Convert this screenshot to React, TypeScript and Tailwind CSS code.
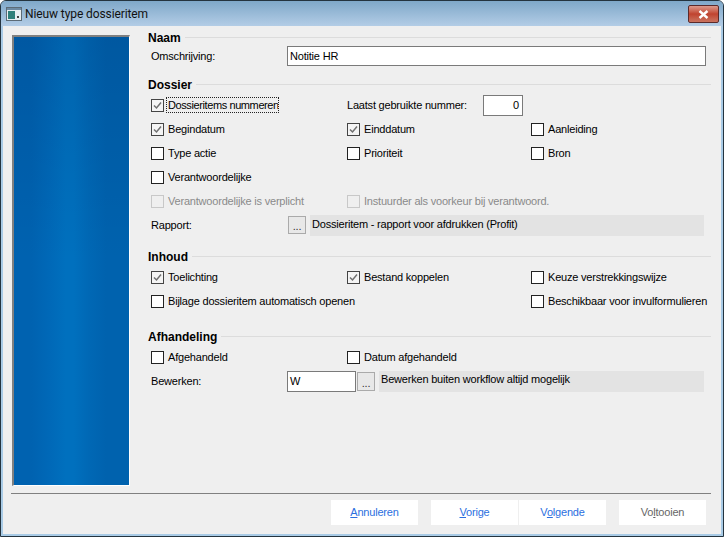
import React from "react";

function Check({ label, checked = false, disabled = false, focus = false }: { label: string; checked?: boolean; disabled?: boolean; focus?: boolean }) {
  return (
    <div className="flex items-center h-6">
      <span className={`w-[13px] h-[13px] border flex items-center justify-center shrink-0 ${disabled ? "border-[#c8c8c8] bg-[#efefef]" : checked ? "border-[#444] bg-[#f4f4f4]" : "border-[#222] bg-white"}`}>
        {checked && (
          <svg width="11" height="11" viewBox="0 0 11 11" fill="none">
            <path d="M2 5.5 L4.5 8 L9 2.5" stroke="#707070" strokeWidth="1.5" />
          </svg>
        )}
      </span>
      <span className={`ml-[2px] px-px whitespace-nowrap leading-[14px] border border-dotted ${focus ? "border-[#222] w-[113px] overflow-hidden tracking-[-0.4px]" : "border-transparent"} ${disabled ? "text-[#8a8a8a]" : "text-black"}`}>
        {label}
      </span>
    </div>
  );
}

function Header({ title }: { title: string }) {
  return (
    <div className="flex items-center h-[17px]">
      <span className="font-bold text-[12px] tracking-normal text-black mr-1">{title}</span>
      <span className="flex-1 h-px bg-[#dcdcdc]" />
    </div>
  );
}

function Dots({ className }: { className: string }) {
  return (
    <span className={`w-[18px] bg-[#e8e8e8] border border-[#aaa] flex items-end justify-center text-[#333] leading-[14px] ${className}`}>...</span>
  );
}

function Btn({ children, gray = false }: { children: React.ReactNode; gray?: boolean }) {
  return (
    <div className={`w-[87px] h-[25px] bg-white flex items-center justify-center ${gray ? "text-[#666]" : "text-[#2b6fe0]"}`}>
      {children}
    </div>
  );
}

export default function App() {
  return (
    <div className="w-[724px] h-[537px] bg-white">
      <div className="w-full h-full flex flex-col rounded-t-[6px] border border-[#24343f] bg-[#a9cbe6] overflow-hidden text-[11px] tracking-[-0.2px] font-['Liberation_Sans',Arial,sans-serif]">
        {/* Title bar */}
        <div className="h-[25px] shrink-0 flex items-center bg-gradient-to-b from-[#7fa8c9] to-[#b3cde6] pl-[5px] pr-[4px]">
          <svg width="16" height="14" viewBox="0 0 16 14" className="shrink-0">
            <rect x="0.5" y="0.5" width="15" height="13" fill="#e8eef2" stroke="#5c6b76" />
            <rect x="1" y="1" width="14" height="2" fill="#6e8ba3" />
            <rect x="2" y="4" width="7" height="8" fill="#2f7f7a" />
            <rect x="11" y="9" width="2" height="2" fill="#444" />
          </svg>
          <span className="ml-[3px] mt-px text-[12px] tracking-[-0.1px] text-[#111] font-['Roboto',sans-serif]">Nieuw type dossieritem</span>
          <div className="ml-auto w-[31px] h-[18px] mt-[1px] rounded-[2px] border border-[#5b2a2a] bg-gradient-to-b from-[#dc9a8c] via-[#c0432f] to-[#c9735f] flex items-center justify-center">
            <svg width="11" height="9" viewBox="0 0 11 9">
              <path d="M1.5 1 L9.5 8 M9.5 1 L1.5 8" stroke="#fff" strokeWidth="2.4" />
            </svg>
          </div>
        </div>

        {/* Body */}
        <div className="flex-1 mx-[2px] mb-[2px] bg-[#efefef] flex flex-col">
          <div className="flex pt-[9px] pl-[9px]">
            <div className="w-[118px] h-[451px] shrink-0 border-t-2 border-l-2 border-b border-r border-t-[#808080] border-l-[#808080] border-b-white border-r-white bg-[linear-gradient(180deg,rgba(0,0,40,0.1),rgba(0,0,40,0)_50%),linear-gradient(90deg,#0062b0_0%,#0062b0_15%,#0068b7_30%,#0070be_45%,#0070be_52%,#0068b5_65%,#0062ae_80%,#0062ae_100%)]" />
            <div className="w-[563px] ml-[18px] -mt-[6px] text-black">
              <Header title="Naam" />
              <div className="flex items-center h-5 pl-[3px]">
                <span className="w-[136px]">Omschrijving:</span>
                <div className="w-[419px] h-5 bg-white border border-[#7a7a7a] pl-[2px] leading-[18px] text-black">Notitie HR</div>
              </div>

              <div className="mt-[10px]"><Header title="Dossier" /></div>
              <div className="pl-[3px] grid grid-cols-[196px_184px_1fr]">
                <Check label="Dossieritems nummeren" checked focus />
                <div className="col-span-2 flex items-center h-6">
                  <span className="w-[136px] whitespace-nowrap">Laatst gebruikte nummer:</span>
                  <div className="w-10 h-[21px] bg-white border border-[#7a7a7a] text-right pr-[3px] leading-[19px]">0</div>
                </div>
                <Check label="Begindatum" checked />
                <Check label="Einddatum" checked />
                <Check label="Aanleiding" />
                <Check label="Type actie" />
                <Check label="Prioriteit" />
                <Check label="Bron" />
                <Check label="Verantwoordelijke" />
                <div className="col-span-2" />
                <Check label="Verantwoordelijke is verplicht" disabled />
                <div className="col-span-2"><Check label="Instuurder als voorkeur bij verantwoord." disabled /></div>
              </div>
              <div className="pl-[3px] flex items-center h-6">
                <span className="w-[137px]">Rapport:</span>
                <Dots className="h-[18px]" />
                <div className="ml-[4px] w-[394px] h-[21px] bg-[#e3e3e3] pl-[2px] leading-[18px]">Dossieritem - rapport voor afdrukken (Profit)</div>
              </div>

              <div className="mt-[11px]"><Header title="Inhoud" /></div>
              <div className="pl-[3px] grid grid-cols-[196px_184px_1fr]">
                <Check label="Toelichting" checked />
                <Check label="Bestand koppelen" checked />
                <Check label="Keuze verstrekkingswijze" />
                <div className="col-span-2"><Check label="Bijlage dossieritem automatisch openen" /></div>
                <Check label="Beschikbaar voor invulformulieren" />
              </div>

              <div className="mt-[15px]"><Header title="Afhandeling" /></div>
              <div className="pl-[3px] grid grid-cols-[196px_1fr]">
                <Check label="Afgehandeld" />
                <Check label="Datum afgehandeld" />
              </div>
              <div className="pl-[3px] flex items-center h-6">
                <span className="w-[136px]">Bewerken:</span>
                <div className="w-[69px] h-[21px] bg-white border border-[#7a7a7a] pl-[2px] leading-[19px]">W</div>
                <Dots className="h-[19px] ml-px" />
                <div className="ml-[4px] w-[325px] h-[21px] bg-[#e3e3e3] pl-[2px] leading-[17px]">Bewerken buiten workflow altijd mogelijk</div>
              </div>
            </div>
          </div>

          <div className="ml-[8px] w-[700px] h-px mt-[7px] bg-[#808080]" />

          <div className="flex mt-[6px] pl-[328px]">
            <Btn><span><span className="underline">A</span>nnuleren</span></Btn>
            <div className="ml-[13px]"><Btn><span><span className="underline">V</span>orige</span></Btn></div>
            <div className="ml-px"><Btn><span>V<span className="underline">o</span>lgende</span></Btn></div>
            <div className="ml-[13px]"><Btn gray><span>Vo<span className="underline">l</span>tooien</span></Btn></div>
          </div>
        </div>
      </div>
    </div>
  );
}
